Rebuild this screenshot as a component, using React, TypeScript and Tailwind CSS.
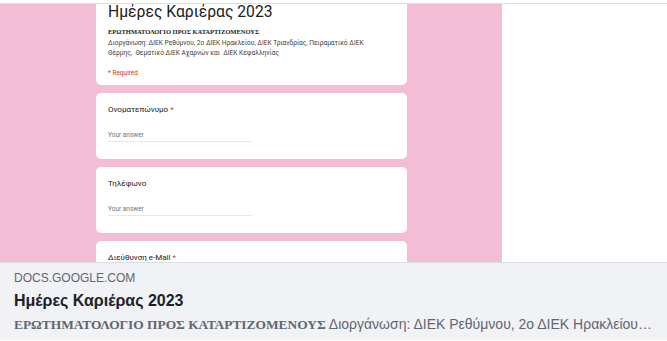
const formFont = { fontFamily: "Roboto, 'Noto Sans', sans-serif" };

const AnswerField = ({ label, required, cut }: { label: string; required?: boolean; cut?: boolean }) => (
  <div className="bg-white rounded-[5px] h-[66px] px-3 pt-[11px] shrink-0">
    <div className="text-[8px] leading-[12px] text-[#202124]">
      {label}
      {required && <span className="text-[#d93025]"> *</span>}
    </div>
    {!cut && (
      <div className="mt-[15px] w-[144px] border-b border-[#e6e6e6] pb-[1px] text-[6.5px] leading-[9px] text-[#70757a]">
        Your answer
      </div>
    )}
  </div>
);

const FormPreview = () => (
  <div className="w-[502px] h-full bg-[#f4bdd6] overflow-hidden">
    <div className="ml-[96px] w-[311px] -mt-[8px] flex flex-col gap-2" style={formFont}>
      <div className="bg-white rounded-[5px] h-[89px] px-3 pt-[8px] shrink-0">
        <h1 className="text-[15.7px] leading-[16px] text-[#202124]">Ημέρες Καριέρας 2023</h1>
        <p
          className="mt-[7px] text-[6.5px] leading-[9px] font-bold text-[#202124]"
          style={{ fontFamily: "'Liberation Serif', serif" }}
        >
          ΕΡΩΤΗΜΑΤΟΛΟΓΙΟ ΠΡΟΣ ΚΑΤΑΡΤΙΖΟΜΕΝΟΥΣ
        </p>
        <p className="mt-[2px] text-[6.6px] leading-[10px] text-[#3c4043] pr-[14px]">
          Διοργάνωση: ΔΙΕΚ Ρεθύμνου, 2ο ΔΙΕΚ Ηρακλείου, ΔΙΕΚ Τριανδρίας, Πειραματικό ΔΙΕΚ Θέρμης,&nbsp; Θεματικό ΔΙΕΚ
          Αχαρνών και&nbsp; ΔΙΕΚ Κεφαλληνίας
        </p>
        <p className="mt-[11px] text-[6.5px] leading-[9px] text-[#d93025]">* Required</p>
      </div>
      <AnswerField label="Ονοματεπώνυμο" required />
      <AnswerField label="Τηλέφωνο" />
      <AnswerField label="Διεύθυνση e-Mail" required cut />
    </div>
  </div>
);

export default function App() {
  return (
    <div className="w-[667px] h-[341px] bg-white pt-[3px]" style={{ fontFamily: "'Liberation Sans', Arial, sans-serif" }}>
      <div className="border-t border-[#dadde1]">
        <div className="h-[259px] flex border-b border-[#dadde1]">
          <FormPreview />
          <div className="flex-1 bg-white" />
        </div>
        <div className="bg-[#f0f2f5] h-[77px] pl-[14px] pr-[12px] pt-[7px]">
          <div className="text-[12px] leading-[16px] text-[#606770] uppercase">docs.google.com</div>
          <div className="mt-[5px] text-[16px] leading-[20px] font-bold text-[#1d2129] truncate">
            Ημέρες Καριέρας 2023
          </div>
          <div className="mt-[3px] text-[14px] leading-[20px] text-[#606770] truncate">
            <span className="font-bold text-[13.4px]" style={{ fontFamily: "'Liberation Serif', serif" }}>
              ΕΡΩΤΗΜΑΤΟΛΟΓΙΟ ΠΡΟΣ ΚΑΤΑΡΤΙΖΟΜΕΝΟΥΣ
            </span>{" "}
            Διοργάνωση: ΔΙΕΚ Ρεθύμνου, 2ο ΔΙΕΚ Ηρακλείου, ΔΙΕΚ Τριανδρίας, Πειραματικό ΔΙΕΚ Θέρμης, Θεματικό ΔΙΕΚ
            Αχαρνών και ΔΙΕΚ Κεφαλληνίας
          </div>
        </div>
      </div>
    </div>
  );
}
